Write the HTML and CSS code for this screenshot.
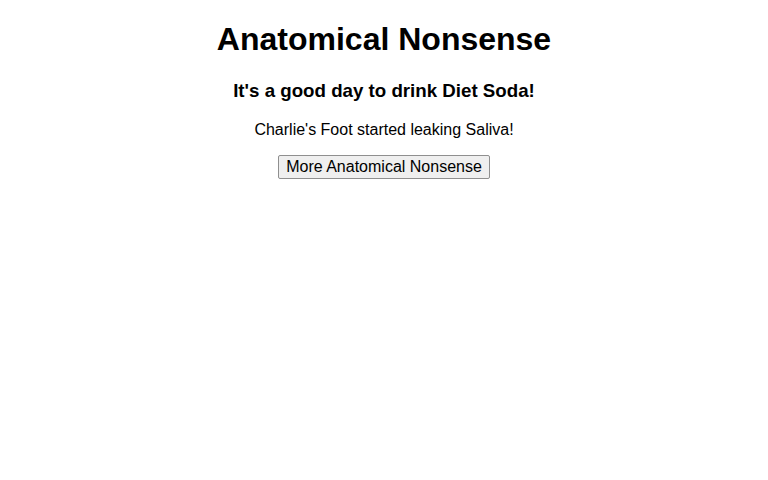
FILE: index.html
```html
<!DOCTYPE html>
<html>
<head>
<meta charset="utf-8">
<link rel="stylesheet" href="styles.css">
</head>
<body>
<main class="page">
  <h1 class="title">Anatomical Nonsense</h1>
  <h3 class="subtitle">It's a good day to drink Diet Soda!</h3>
  <p class="message">Charlie's Foot started leaking Saliva!</p>
  <p class="actions"><button class="more-btn" type="button">More Anatomical Nonsense</button></p>
</main>
</body>
</html>
```
FILE: styles.css
```css
body {
  margin: 0 8px;
  background: #ffffff;
  color: #000000;
  font-family: "Liberation Sans", Arial, sans-serif;
}
.page {
  text-align: center;
}
.title {
  font-size: 32px;
  font-weight: bold;
  margin: 21.44px 0;
}
.subtitle {
  font-size: 18.72px;
  font-weight: bold;
  margin: 18.72px 0;
}
.message {
  font-size: 16px;
  margin: 16px 0;
}
.actions {
  margin: 16px 0;
}
.more-btn {
  font-family: "Liberation Sans", Arial, sans-serif;
  font-size: 16px;
  color: #000000;
  background: #efefef;
  border: 1px solid #8f8f8f;
  border-radius: 2px;
  padding: 2px 7px;
}
```
